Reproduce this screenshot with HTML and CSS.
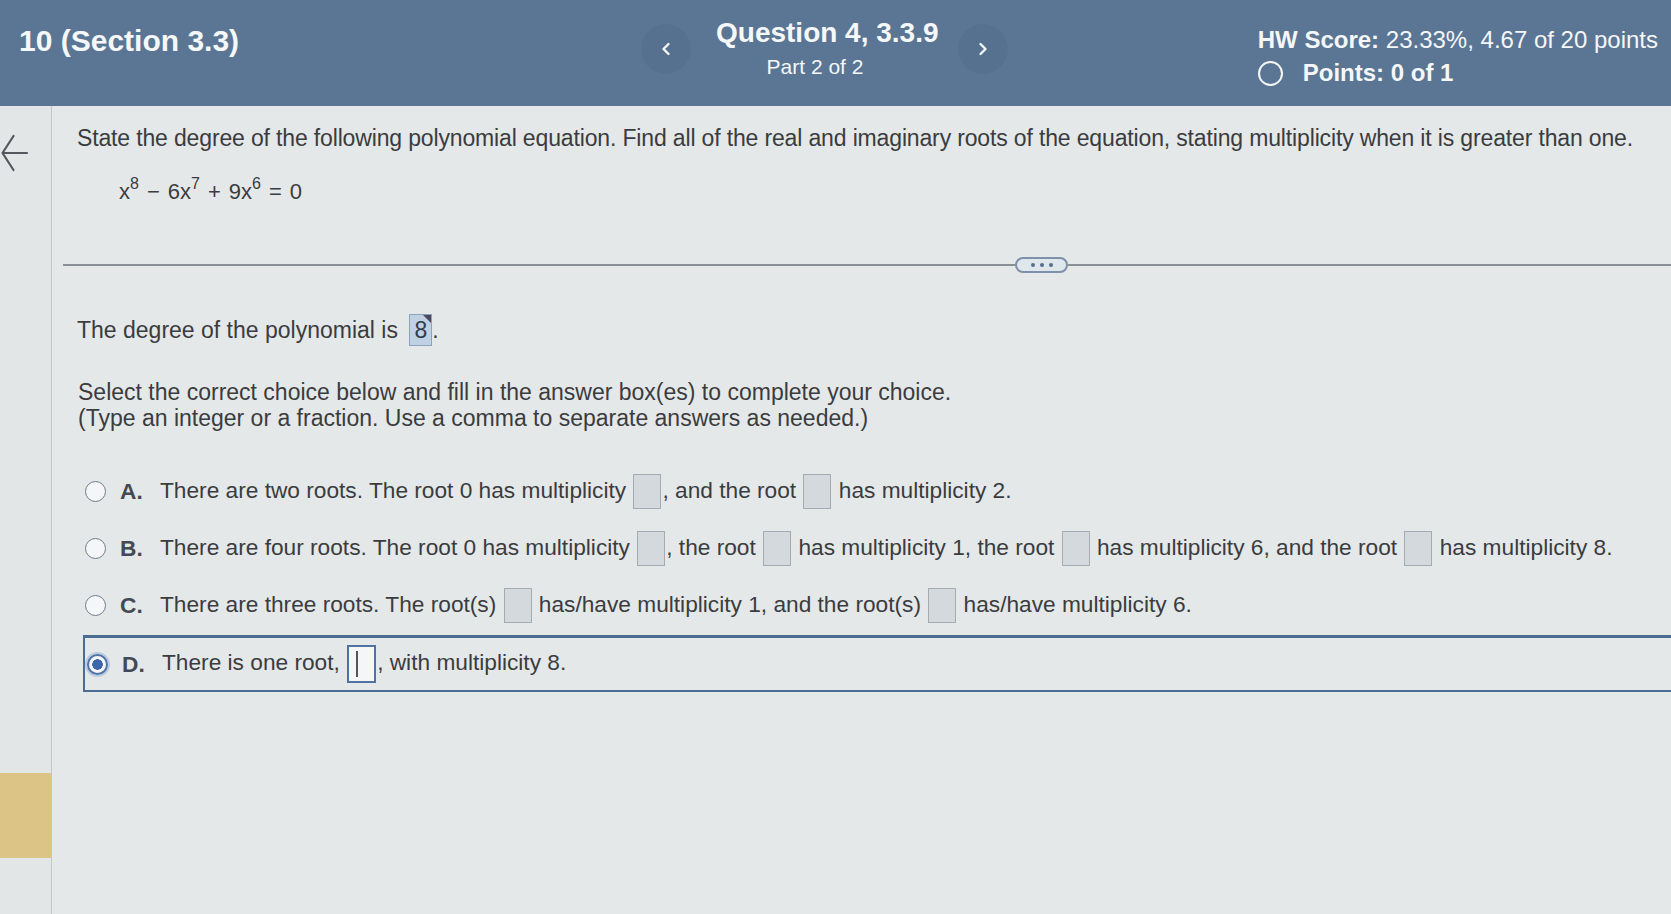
FILE: index.html
```html
<!DOCTYPE html>
<html lang="en">
<head>
<meta charset="utf-8">
<title>Question 4, 3.3.9</title>
<link rel="stylesheet" href="styles.css">
</head>
<body>
<header class="topbar">
  <div class="hdr-left"><h1 class="hw-title">10 (Section 3.3)</h1></div>
  <button class="nav-btn" aria-label="Previous question">
    <svg width="12" height="16" viewBox="0 0 12 16"><path d="M8.5 3 L3.5 8 L8.5 13" fill="none" stroke="#f3f6f9" stroke-width="2.4" stroke-linecap="round" stroke-linejoin="round"/></svg>
  </button>
  <div class="q-block">
    <div class="q-title">Question 4, 3.3.9</div>
    <div class="q-part">Part 2 of 2</div>
  </div>
  <button class="nav-btn" aria-label="Next question">
    <svg width="12" height="16" viewBox="0 0 12 16"><path d="M3.5 3 L8.5 8 L3.5 13" fill="none" stroke="#f3f6f9" stroke-width="2.4" stroke-linecap="round" stroke-linejoin="round"/></svg>
  </button>
  <div class="score">
    <div class="score-line"><b>HW Score:</b> 23.33%, 4.67 of 20 points</div>
    <div class="points-line"><span class="ring"></span><b>Points: 0 of 1</b></div>
  </div>
</header>

<div class="page">
  <aside class="side">
    <svg class="back" width="30" height="40" viewBox="0 0 30 40"><path d="M27 20 H2.5 M13.5 3 L2.5 20 L13.5 37" fill="none" stroke="#55595d" stroke-width="2.2" stroke-linecap="round" stroke-linejoin="round"/></svg>
    <div class="flag"></div>
  </aside>

  <main class="content">
    <p class="prompt">State the degree of the following polynomial equation. Find all of the real and imaginary roots of the equation, stating multiplicity when it is greater than one.</p>
    <div class="equation">x<sup>8</sup><span class="op">&minus;</span>6x<sup>7</sup><span class="op">+</span>9x<sup>6</sup><span class="op">=</span>0</div>

    <div class="divider">
      <span class="seg seg-a"></span>
      <span class="pill"><i></i><i></i><i></i></span>
      <span class="seg seg-b"></span>
    </div>

    <div class="degree">The degree of the polynomial is <span class="filled">8</span>.</div>

    <p class="instr">Select the correct choice below and fill in the answer box(es) to complete your choice.<br>(Type an integer or a fraction. Use a comma to separate answers as needed.)</p>

    <div class="choices">
      <div class="choice">
        <span class="radio"></span><span class="letter">A.</span>
        <span class="ctext">There are two roots. The root 0 has multiplicity <span class="blank"></span>, and the root <span class="blank"></span> has multiplicity 2.</span>
      </div>
      <div class="choice">
        <span class="radio"></span><span class="letter">B.</span>
        <span class="ctext">There are four roots. The root 0 has multiplicity <span class="blank"></span>, the root <span class="blank"></span> has multiplicity 1, the root <span class="blank"></span> has multiplicity 6, and the root <span class="blank"></span> has multiplicity 8.</span>
      </div>
      <div class="choice">
        <span class="radio"></span><span class="letter">C.</span>
        <span class="ctext">There are three roots. The root(s) <span class="blank"></span> has/have multiplicity 1, and the root(s) <span class="blank"></span> has/have multiplicity 6.</span>
      </div>
      <div class="choice selected">
        <span class="radio on"></span><span class="letter">D.</span>
        <span class="ctext">There is one root, <span class="blank active"><span class="caret"></span></span>, with multiplicity 8.</span>
      </div>
    </div>
  </main>
</div>
</body>
</html>
```

FILE: styles.css
```css
* { box-sizing: border-box; }
html, body { margin: 0; padding: 0; }
body {
  width: 1671px;
  height: 914px;
  overflow: hidden;
  background: #e5e8e8;
  font-family: "Liberation Sans", Arial, sans-serif;
  color: #3a3c3f;
}

/* ---------- header ---------- */
.topbar {
  display: flex;
  align-items: flex-start;
  height: 106px;
  background: #5a7694;
  color: #f5f7f9;
}
.hdr-left { width: 641px; padding: 23px 0 0 19px; }
.hw-title { margin: 0; font-size: 30px; line-height: 36px; font-weight: bold; white-space: nowrap; }
.nav-btn {
  width: 50px;
  height: 50px;
  margin-top: 24px;
  padding: 0;
  border: 0;
  border-radius: 50%;
  background: rgba(40, 60, 85, 0.08);
  display: flex;
  align-items: center;
  justify-content: center;
}
.q-block { width: 220px; margin: 16px 22px 0 25px; text-align: center; }
.q-title { font-size: 28px; line-height: 34px; font-weight: bold; white-space: nowrap; }
.q-part { font-size: 21px; line-height: 26px; margin-top: 4px; padding-right: 22px; white-space: nowrap; }
.score { margin-left: auto; padding: 25px 13px 0 0; }
.score-line { font-size: 24px; line-height: 30px; white-space: nowrap; }
.points-line { display: flex; align-items: center; font-size: 24px; line-height: 30px; margin-top: 3px; }
.ring {
  width: 25px;
  height: 25px;
  border: 2.5px solid #f5f7f9;
  border-radius: 50%;
  margin-right: 20px;
}

/* ---------- page ---------- */
.page { display: flex; height: 808px; }
.side {
  width: 52px;
  flex: none;
  border-right: 1px solid #c3c7c8;
  background: #e3e6e6;
  display: flex;
  flex-direction: column;
}
.back { margin-top: 27px; }
.flag { margin-top: 600px; height: 85px; background: #dcc486; }

.content { flex: 1; min-width: 0; padding: 19px 0 0 25px; }
.prompt { margin: 0; font-size: 23px; line-height: 26px; white-space: nowrap; letter-spacing: -0.15px; }
.equation { margin: 28px 0 0 42px; font-size: 22px; line-height: 26px; }
.equation sup { font-size: 16px; line-height: 0; vertical-align: 10px; }
.equation .op { margin: 0 8px; }

.divider { display: flex; align-items: center; height: 18px; margin: 51px 0 0 -14px; }
.seg { height: 2px; background: #888f95; }
.seg-a { width: 952px; flex: none; }
.seg-b { flex: 1; }
.pill {
  width: 53px;
  height: 16px;
  border: 2px solid #7d92a8;
  border-radius: 8px;
  background: #dfe6ec;
  display: flex;
  align-items: center;
  justify-content: center;
  gap: 5px;
}
.pill i { width: 4px; height: 4px; border-radius: 50%; background: #566f8c; }

.degree { display: flex; align-items: center; height: 32px; margin-top: 40px; font-size: 23px; white-space: pre; }
.filled {
  position: relative;
  display: inline-flex;
  align-items: center;
  justify-content: center;
  width: 23px;
  height: 32px;
  margin-left: 5px;
  background: #bfd1e2;
  border: 1px solid #8aa4bf;
  color: #2f3d4c;
}
.filled::after {
  content: "";
  position: absolute;
  top: 0;
  right: 0;
  border-top: 8px solid #4a4862;
  border-left: 8px solid transparent;
}

.instr { margin: 33px 0 0 1px; font-size: 23px; line-height: 26px; white-space: nowrap; }

/* ---------- choices ---------- */
.choices { margin-top: 32px; }
.choice {
  display: flex;
  align-items: center;
  height: 57px;
  padding-left: 8px;
  font-size: 22.7px;
  white-space: nowrap;
}
.choice.selected {
  margin: 1px 0 0 6px;
  padding-left: 2px;
  border: 2px solid #4b6c93;
  border-right: 0;
  border-top-width: 3px;
}
.radio {
  width: 21px;
  height: 21px;
  flex: none;
  border: 1.5px solid #6e7d8c;
  border-radius: 50%;
  background: #f4f6f7;
}
.radio.on {
  border: 2px solid #4f74a8;
  background: radial-gradient(circle, #3e66ad 0 5px, #f4f6f7 5.5px);
  box-shadow: 0 0 0 2px rgba(110, 150, 205, 0.35);
}
.letter { width: 40px; flex: none; margin-left: 14px; font-weight: bold; color: #424a53; }
.ctext { line-height: 26px; }
.blank {
  display: inline-block;
  width: 28px;
  height: 35px;
  margin: 0 1px;
  vertical-align: middle;
  border: 1px solid #a3abb3;
  background: #d4d9dd;
}
.blank.active {
  display: inline-flex;
  align-items: center;
  width: 29px;
  height: 38px;
  padding-left: 7px;
  border: 2px solid #4f72a4;
  background: #f4f6f8;
}
.caret { width: 1.5px; height: 26px; background: #555; }
```
